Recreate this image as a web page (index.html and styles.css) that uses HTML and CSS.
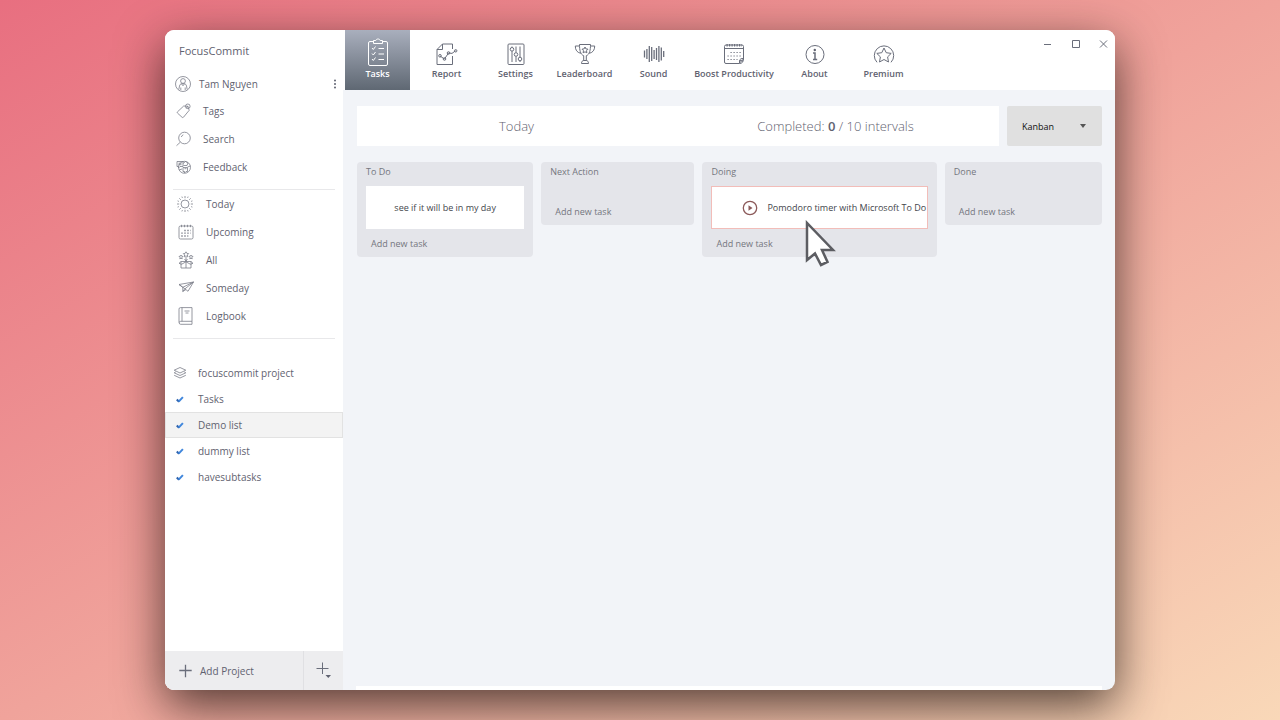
FILE: index.html
```html
<!DOCTYPE html>
<html lang="en">
<head>
    <meta charset="UTF-8">
    <meta name="viewport" content="width=device-width, initial-scale=1.0">
    <title>FocusCommit</title>
    <link rel="stylesheet" href="styles.css">
</head>
<body>
<div class="window">

    <aside class="sidebar">
        <h1 class="brand">FocusCommit</h1>

        <div class="user-row">
            <a href="#" class="user">
                <svg class="icon" width="18" height="18" viewBox="0 0 18 18"><circle cx="9" cy="9" r="7.5"/><circle cx="9" cy="6" r="2.4"/><path d="M4.8 14.500l.7-3.500c.3-1.500 1.300-2.300 2.300-2.300h2.400c1 0 2 .8 2.300 2.300l.7 3.500M7.400 8.700L9 10.800l1.600-2.100M6.800 15v-2.500M11.200 15v-2.500"/></svg>
                <span>Tam Nguyen</span>
            </a>
            <button type="button" class="dots" aria-label="Account menu">
                <svg width="4" height="10" viewBox="0 0 4 10"><circle cx="2" cy="1.500" r="1"/><circle cx="2" cy="5" r="1"/><circle cx="2" cy="8.500" r="1"/></svg>
            </button>
        </div>
        <nav class="menu">
            <a href="#">
                <svg class="icon" width="18" height="18" viewBox="0 0 18 18"><path d="M2.500 9.800L8.700 4l4.200.3 1.300 4-5.700 6.900c-.4.500-.9.500-1.400.1L2.600 11.200c-.5-.5-.5-.9-.1-1.400z"/><circle cx="12.800" cy="4.300" r="2.300"/><path d="M11.300 6.300l1.700-2.300"/></svg>
                <span>Tags</span>
            </a>
            <a href="#">
                <svg class="icon" width="18" height="18" viewBox="0 0 18 18"><circle cx="9.500" cy="8" r="5.800"/><path d="M5.300 12.200l-3.800 3.500M6.300 7a3.500 3.500 0 0 1 2-2.200"/></svg>
                <span>Search</span>
            </a>
            <a href="#">
                <svg class="icon" width="18" height="18" viewBox="0 0 18 18"><circle cx="9.500" cy="9.300" r="6"/><path d="M2 3.500h6v5H5L3.500 10V8.500H2zM3.500 5.200h3M3.500 6.700h3M8 5.500l2.500-2 2.500 1.500-1 2.500H8.500M8 9.500h4.500v4H11l-1.500 1.500v-1.500H8zM4 12l3-1M12.500 9l2.800-1M9.500 10.700h2"/></svg>
                <span>Feedback</span>
            </a>
        </nav>

        <hr>

        <nav class="menu views">
            <a href="#">
                <svg class="icon" width="18" height="18" viewBox="0 0 18 18"><circle cx="9" cy="9" r="4"/><path d="M9 1v2.200M9 14.800V17M1 9h2.200M14.800 9H17M3.300 3.300l1.500 1.500M13.200 13.200l1.500 1.500M14.700 3.300l-1.500 1.500M4.800 13.200l-1.500 1.500M5.900 1.600l.5 1.300M12.100 1.600l-.5 1.300M5.900 16.400l.5-1.300M12.100 16.400l-.5-1.300M1.600 5.900l1.300.5M1.600 12.100l1.300-.5M16.400 5.900l-1.300.5M16.400 12.100l-1.300-.5"/></svg>
                <span>Today</span>
            </a>
            <a href="#">
                <svg class="icon" width="18" height="18" viewBox="0 0 18 18"><rect x="3" y="3" width="14" height="13" rx="1.500"/><path d="M5.500 1.800v2.400M8.500 1.800v2.400M11.500 1.800v2.400M14.500 1.800v2.400"/><path stroke-width="1.300" stroke-dasharray="1.400 1.600" d="M8.300 7.500h6.500M5.300 10.200h9.500M5.300 13h7"/></svg>
                <span>Upcoming</span>
            </a>
            <a href="#">
                <svg class="icon" width="18" height="18" viewBox="0 0 18 18"><path d="M5 10.500h10V17H5zM5 10.500l-2 1.800 2.500 1 4.500-2.500 4.500 2.500 2.500-1-2-1.800M10 10.500V17M10 10.500V6M8.500 8L10 10l1.500-2"/><path d="M10 .8l.9 1.600 1.800.2-1.300 1.300.3 1.900-1.700-.9-1.700.9.300-1.900-1.300-1.300 1.800-.2z"/><path d="M5 4l.6 1.200 1.400.2-1 1 .2 1.400L5 7.200l-1.200.6L4 6.400l-1-1 1.400-.2zM15 4l.6 1.200 1.400.2-1 1 .2 1.400-1.200-.6-1.200.6.200-1.400-1-1 1.400-.2z"/></svg>
                <span>All</span>
            </a>
            <a href="#">
                <svg class="icon" width="18" height="18" viewBox="0 0 18 18"><path d="M3 5.500L17.500 3 12 12.300 9 9.800zM17.500 3L6.800 8.300v4.200l2-2.700M6.800 12.500l3.200-2M3 5.500l3.800 2.800M17.500 3L9 9.800"/></svg>
                <span>Someday</span>
            </a>
            <a href="#">
                <svg class="icon" width="18" height="18" viewBox="0 0 18 18"><path d="M16 14.300V.6H4.500A1.500 1.500 0 0 0 3 2.100v13.400M16 14.300H4.700a1.500 1.500 0 0 0 0 3H16v-3M6 .6v13.700M8.500 4h5M9.500 6h3"/></svg>
                <span>Logbook</span>
            </a>
        </nav>

        <hr>

        <ul class="lists">
            <li><a href="#">
                <svg class="icon" width="14" height="14" viewBox="0 0 14 14"><path d="M7 1.500l5.800 2.700L7 7 1.200 4.200zM1.200 6.800L7 9.500l5.800-2.700M1.200 9.300L7 12l5.800-2.700M1.200 6.800l1.600-.9M12.800 6.800l-1.600-.9"/></svg>
                <span>focuscommit project</span>
            </a></li>
            <li><a href="#"><svg class="tick" width="14" height="14" viewBox="0 0 14 14"><path class="tick-b" d="M3.800 7.500l2.200 2.200"/><path d="M5.700 9.600l4.200-4.500"/></svg><span>Tasks</span></a></li>
            <li class="selected"><a href="#"><svg class="tick" width="14" height="14" viewBox="0 0 14 14"><path class="tick-b" d="M3.800 7.500l2.200 2.200"/><path d="M5.700 9.600l4.200-4.500"/></svg><span>Demo list</span></a></li>
            <li><a href="#"><svg class="tick" width="14" height="14" viewBox="0 0 14 14"><path class="tick-b" d="M3.800 7.500l2.200 2.200"/><path d="M5.700 9.600l4.200-4.500"/></svg><span>dummy list</span></a></li>
            <li><a href="#"><svg class="tick" width="14" height="14" viewBox="0 0 14 14"><path class="tick-b" d="M3.800 7.500l2.200 2.200"/><path d="M5.700 9.600l4.200-4.500"/></svg><span>havesubtasks</span></a></li>
        </ul>

        <div class="sidebar-footer">
            <button type="button" class="add-project">
                <svg width="14" height="14" viewBox="0 0 14 14"><path stroke-width="1.300" d="M6.500.8v12.400M.3 6.500h12.400"/></svg>
                <span>Add Project</span>
            </button>
            <button type="button" class="add-more" aria-label="Add more">
                <svg width="16" height="18" viewBox="0 0 16 18"><path d="M6.500.5v11.500M.5 6.500h12"/><path class="solid" d="M9.500 13h5.500l-2.700 3z"/></svg>
            </button>
        </div>
    </aside>

    <div class="content">
        <header class="topbar">
            <nav class="tabs">
                <a href="#" class="tab active">
                    <svg width="22" height="28" viewBox="0 0 22 28"><rect x="1.500" y="3.500" width="19" height="24" rx="1.500"/><path class="cap" d="M6.500 5.500v-3h2.300c.4-2 4-2 4.400 0h2.300v3z"/><path d="M5 10l1.300 1.500L8.500 8.500M5 15.500L6.300 17l2.200-3M5 21l1.300 1.500 2.200-3M11.500 10.500H17M11.500 16H17M11.500 21.500H17"/></svg>
                    <span>Tasks</span>
                </a>
                <a href="#" class="tab">
                    <svg width="22" height="24" viewBox="0 0 22 24"><path d="M16.500 7V2H6.500L1 7.500v15h15.500v-8.500M6.500 2v5.500H1M4 14l4.500 3 4-6 3.500.4 3.500-2.600"/><circle cx="4" cy="13.800" r="1.300"/><circle cx="8.500" cy="17" r="1.300"/><circle cx="12.500" cy="11" r="1.300"/><circle cx="19.700" cy="8.800" r="1.200"/></svg>
                    <span>Report</span>
                </a>
                <a href="#" class="tab">
                    <svg width="22" height="24" viewBox="0 0 22 24"><rect x="3" y="2" width="16" height="20.500" rx="1"/><path d="M7 4.500v1M7 9v11M11 4.500v6M11 14.500V20M15 4.500V15M15 19v1"/><circle cx="7" cy="7.300" r="1.800"/><circle cx="11" cy="12.500" r="1.800"/><circle cx="15" cy="17" r="1.800"/></svg>
                    <span>Settings</span>
                </a>
                <a href="#" class="tab">
                    <svg width="22" height="24" viewBox="0 0 22 24"><path d="M5.500 2.500h11c0 5.500-.8 10-4.200 11.200v4.800h-2.600v-4.800C6.300 12.500 5.500 8 5.500 2.500zM5.600 4H1.300c0 4 1.700 6.500 5.400 7.300M16.400 4h4.300c0 4-1.700 6.500-5.400 7.300M7.500 21.500c0-2 1-3 2.200-3h2.600c1.200 0 2.200 1 2.200 3zM11 5l.9 1.900 2.100.3-1.500 1.500.4 2.100L11 9.800l-1.900 1 .4-2.100L8 7.200l2.100-.3z"/></svg>
                    <span>Leaderboard</span>
                </a>
                <a href="#" class="tab">
                    <svg width="22" height="24" viewBox="0 0 22 24"><path stroke-width="1.300" d="M1.500 8.500v7M3.900 7v10M6.300 4v16M8.700 5v14M11.100 8v9M13.500 6v12M15.900 4v16M18.300 5.500v13M20.700 9v6"/></svg>
                    <span>Sound</span>
                </a>
                <a href="#" class="tab tab-wide">
                    <svg width="22" height="24" viewBox="0 0 22 24"><path d="M1.500 6.500h19V17l-4.500 4.500H3A1.500 1.500 0 0 1 1.500 20V4.500A1.500 1.500 0 0 1 3 3h16a1.500 1.500 0 0 1 1.500 1.500V7"/><path d="M20.500 16.500c-2-.2-4 .5-4 2.500v2.500c2.500 0 4-1.500 4-5zM17 18.500l3 .5"/><path stroke-width="2.500" stroke-dasharray="1.200 1.300" d="M3.500 3.300h15.500"/><path stroke-width="1.200" stroke-dasharray="1.200 1.800" d="M7.500 10.500h10.500M4.500 14h13.500M4.500 17.500h10"/></svg>
                    <span>Boost Productivity</span>
                </a>
                <a href="#" class="tab">
                    <svg width="22" height="24" viewBox="0 0 22 24"><circle cx="11" cy="12.500" r="9"/><circle class="solid" cx="10.800" cy="8" r="1.200"/><path d="M9 11h2v6.500M9 17.500h4.200" stroke-width="1.500"/></svg>
                    <span>About</span>
                </a>
                <a href="#" class="tab">
                    <svg width="22" height="24" viewBox="0 0 22 24"><path d="M4 20.300a9.700 9.700 0 1 1 14 0"/><path d="M11 6l2.200 4.700 5 .7-3.600 3.500.9 5.100-4.500-2.500L6.500 20l.9-5.100-3.600-3.500 5-.7z"/></svg>
                    <span>Premium</span>
                </a>
            </nav>
            <div class="window-buttons">
                <button type="button" aria-label="Minimize"><svg width="10" height="10" viewBox="0 0 10 10"><path d="M2 5.500h7"/></svg></button>
                <button type="button" aria-label="Maximize"><svg width="10" height="10" viewBox="0 0 10 10"><path d="M2.500 1.500h7v7h-7z"/></svg></button>
                <button type="button" aria-label="Close"><svg width="10" height="10" viewBox="0 0 10 10"><path d="M2 1.500l7 7M9 1.500l-7 7"/></svg></button>
            </div>
        </header>

        <main class="board">
            <div class="summary">
                <div class="summary-card">
                    <span>Today</span>
                    <span>Completed: <b>0</b> / 10 intervals</span>
                </div>
                <div class="view-select">
                    <select aria-label="View">
                        <option>Kanban</option>
                        <option>List</option>
                    </select>
                    <svg class="arrow" width="6" height="4" viewBox="0 0 6 4"><path d="M0 0h6L3 4z"/></svg>
                </div>
            </div>

            <div class="columns">
                <section class="column">
                    <h2>To Do</h2>
                    <div class="task">see if it will be in my day</div>
                    <button type="button" class="add-task">Add new task</button>
                </section>
                <section class="column">
                    <h2>Next Action</h2>
                    <button type="button" class="add-task">Add new task</button>
                </section>
                <section class="column">
                    <h2>Doing</h2>
                    <div class="task running">
                        <svg width="16" height="16" viewBox="0 0 16 16"><circle cx="8" cy="8" r="6.700"/><path d="M6.500 5.200v5.600L10.500 8z"/></svg>
                        <span>Pomodoro timer with Microsoft To Do</span>
                    </div>
                    <button type="button" class="add-task">Add new task</button>
                    <!-- mouse pointer -->
                    <svg class="pointer" width="32" height="48" viewBox="0 0 32 48"><path d="M3 3v37l8-6.500 6 11.500 6.500-3-5.500-12h11z"/></svg>
                </section>
                <section class="column">
                    <h2>Done</h2>
                    <button type="button" class="add-task">Add new task</button>
                </section>
            </div>
        </main>
        <div class="bottom-line"></div>
    </div>

</div>
</body>
</html>
```

FILE: styles.css
```css
* {
    box-sizing: border-box;
}

body {
    margin: 0;
    height: 100vh;
    padding: 30px 165px;
    font-family: "Open Sans", "Noto Sans", sans-serif;
    font-size: 10px;
    color: #5f6270;
    background: linear-gradient(to bottom right, #e86f80 0%, #f0a39b 50%, #f9d8b8 100%);
}

a {
    color: inherit;
    text-decoration: none;
}

button {
    border: 0;
    padding: 0;
    background: none;
    font: inherit;
    color: inherit;
}

svg {
    display: block;
    flex: none;
    fill: none;
    stroke: #6a6e7b;
    stroke-width: 1;
}

.window {
    display: flex;
    height: 100%;
    border-radius: 9px;
    overflow: hidden;
    background: #f2f4f8;
    box-shadow: 0 16px 48px rgba(30, 20, 15, 0.75);
}

/* sidebar */
.sidebar {
    display: flex;
    flex-direction: column;
    width: 178px;
    flex: none;
    background: #fff;
}

.brand {
    margin: 0;
    padding: 11px 14px 9px;
    font-size: 11px;
    line-height: 20px;
    font-weight: 400;
}

.user-row {
    display: flex;
    align-items: center;
    justify-content: space-between;
    height: 27px;
    padding: 0 6px 0 9px;
}

.user {
    display: flex;
    align-items: center;
    gap: 7px;
}

.dots svg {
    fill: #5f6270;
    stroke: none;
}

.menu a {
    display: flex;
    align-items: center;
    gap: 10px;
    height: 28px;
    padding-left: 10px;
}

.views a {
    gap: 12px;
    padding-left: 11px;
}

.icon {
    stroke: #7b7e89;
    stroke-width: 0.8;
}

.sidebar hr {
    width: 162px;
    height: 1px;
    margin: 8px 8px 0;
    border: 0;
    background: #e8e8ea;
}

.lists {
    margin: 21px 0 0;
    padding: 0;
    list-style: none;
}

.lists a {
    display: flex;
    align-items: center;
    gap: 11px;
    height: 26px;
    padding-left: 8px;
}

.lists .selected {
    background: #f3f3f3;
    box-shadow: inset 0 0 0 1px #e2e2e2;
}

.tick {
    stroke: #3f86dc;
    stroke-width: 2;
}

.tick-b {
    stroke: #2d62ad;
}

.sidebar-footer {
    display: flex;
    height: 39px;
    margin-top: auto;
    background: #ededef;
}

.add-project {
    display: flex;
    flex: 1;
    align-items: center;
    gap: 7px;
    padding-left: 14px;
}

.add-more {
    display: flex;
    align-items: center;
    justify-content: center;
    width: 40px;
    border-left: 1px solid #e0e0e3;
}

.solid {
    fill: #5f6270;
    stroke: none;
}

/* right side */
.content {
    display: flex;
    flex: 1;
    flex-direction: column;
    min-width: 0;
    font-size: 9px;
}

.topbar {
    display: flex;
    justify-content: space-between;
    height: 60px;
    padding-left: 2px;
    background: #fff;
}

.tabs {
    display: flex;
    gap: 4px;
}

.tab {
    display: flex;
    flex-direction: column;
    align-items: center;
    justify-content: flex-end;
    gap: 1px;
    width: 65px;
    padding-bottom: 9px;
    font-weight: 600;
    line-height: 14px;
    white-space: nowrap;
}

.tab-wide {
    width: 88px;
}

.tab.active {
    color: #fff;
    background: linear-gradient(#a9afbd, #5f6873);
}

.tab.active svg {
    stroke: #fff;
}

.tab .cap {
    fill: #9aa1ae;
}

.window-buttons {
    display: flex;
    gap: 4px;
}

.window-buttons button {
    display: flex;
    align-items: center;
    justify-content: center;
    width: 24px;
    height: 28px;
}

.board {
    flex: 1;
    padding: 16px 13px 16px 14px;
}

.summary {
    display: flex;
    gap: 8px;
    height: 40px;
}

.summary-card {
    display: grid;
    grid-template-columns: 1fr 1fr;
    flex: 1;
    align-items: center;
    padding-right: 4px;
    background: #fff;
    text-align: center;
    font-size: 13px;
    font-weight: 300;
}

.summary-card b {
    font-weight: 600;
}

.view-select {
    position: relative;
    width: 95px;
}

.view-select select {
    appearance: none;
    width: 100%;
    height: 100%;
    padding: 0 15px;
    border: 0;
    border-radius: 2px;
    background: #e0e0e0;
    font: inherit;
    color: #111;
}

.view-select .arrow {
    position: absolute;
    right: 16px;
    top: 18px;
    fill: #555;
    stroke: none;
}

.columns {
    display: grid;
    grid-template-columns: 176fr 153fr 234fr 157fr;
    align-items: start;
    gap: 8px;
    margin-top: 16px;
}

.column {
    position: relative;
    min-width: 0;
    padding: 0 9px;
    border-radius: 4px;
    background: #e4e5ea;
    color: #74767e;
}

.column h2 {
    margin: 0 0 4px;
    font-size: 9px;
    line-height: 20px;
    font-weight: 400;
}

.task {
    display: flex;
    align-items: center;
    justify-content: center;
    height: 43px;
    background: #fff;
    color: #44464c;
    white-space: nowrap;
    overflow: hidden;
}

.running {
    justify-content: flex-start;
    gap: 9px;
    padding-left: 30px;
    border: 1px solid #f2bdb9;
}

.running svg {
    stroke: #8c5a5a;
    stroke-width: 1.3;
}

.running path {
    fill: #8c5a5a;
    stroke: none;
}

.add-task {
    display: block;
    height: 28px;
    padding: 0 5px;
}

h2 + .add-task {
    margin-top: 15px;
}

.pointer {
    position: absolute;
    left: 102px;
    top: 58px;
    fill: #fff;
    stroke: #5c5d62;
    stroke-width: 2.500;
}

.bottom-line {
    height: 4px;
    margin: 0 13px;
    background: #fff;
}
```
